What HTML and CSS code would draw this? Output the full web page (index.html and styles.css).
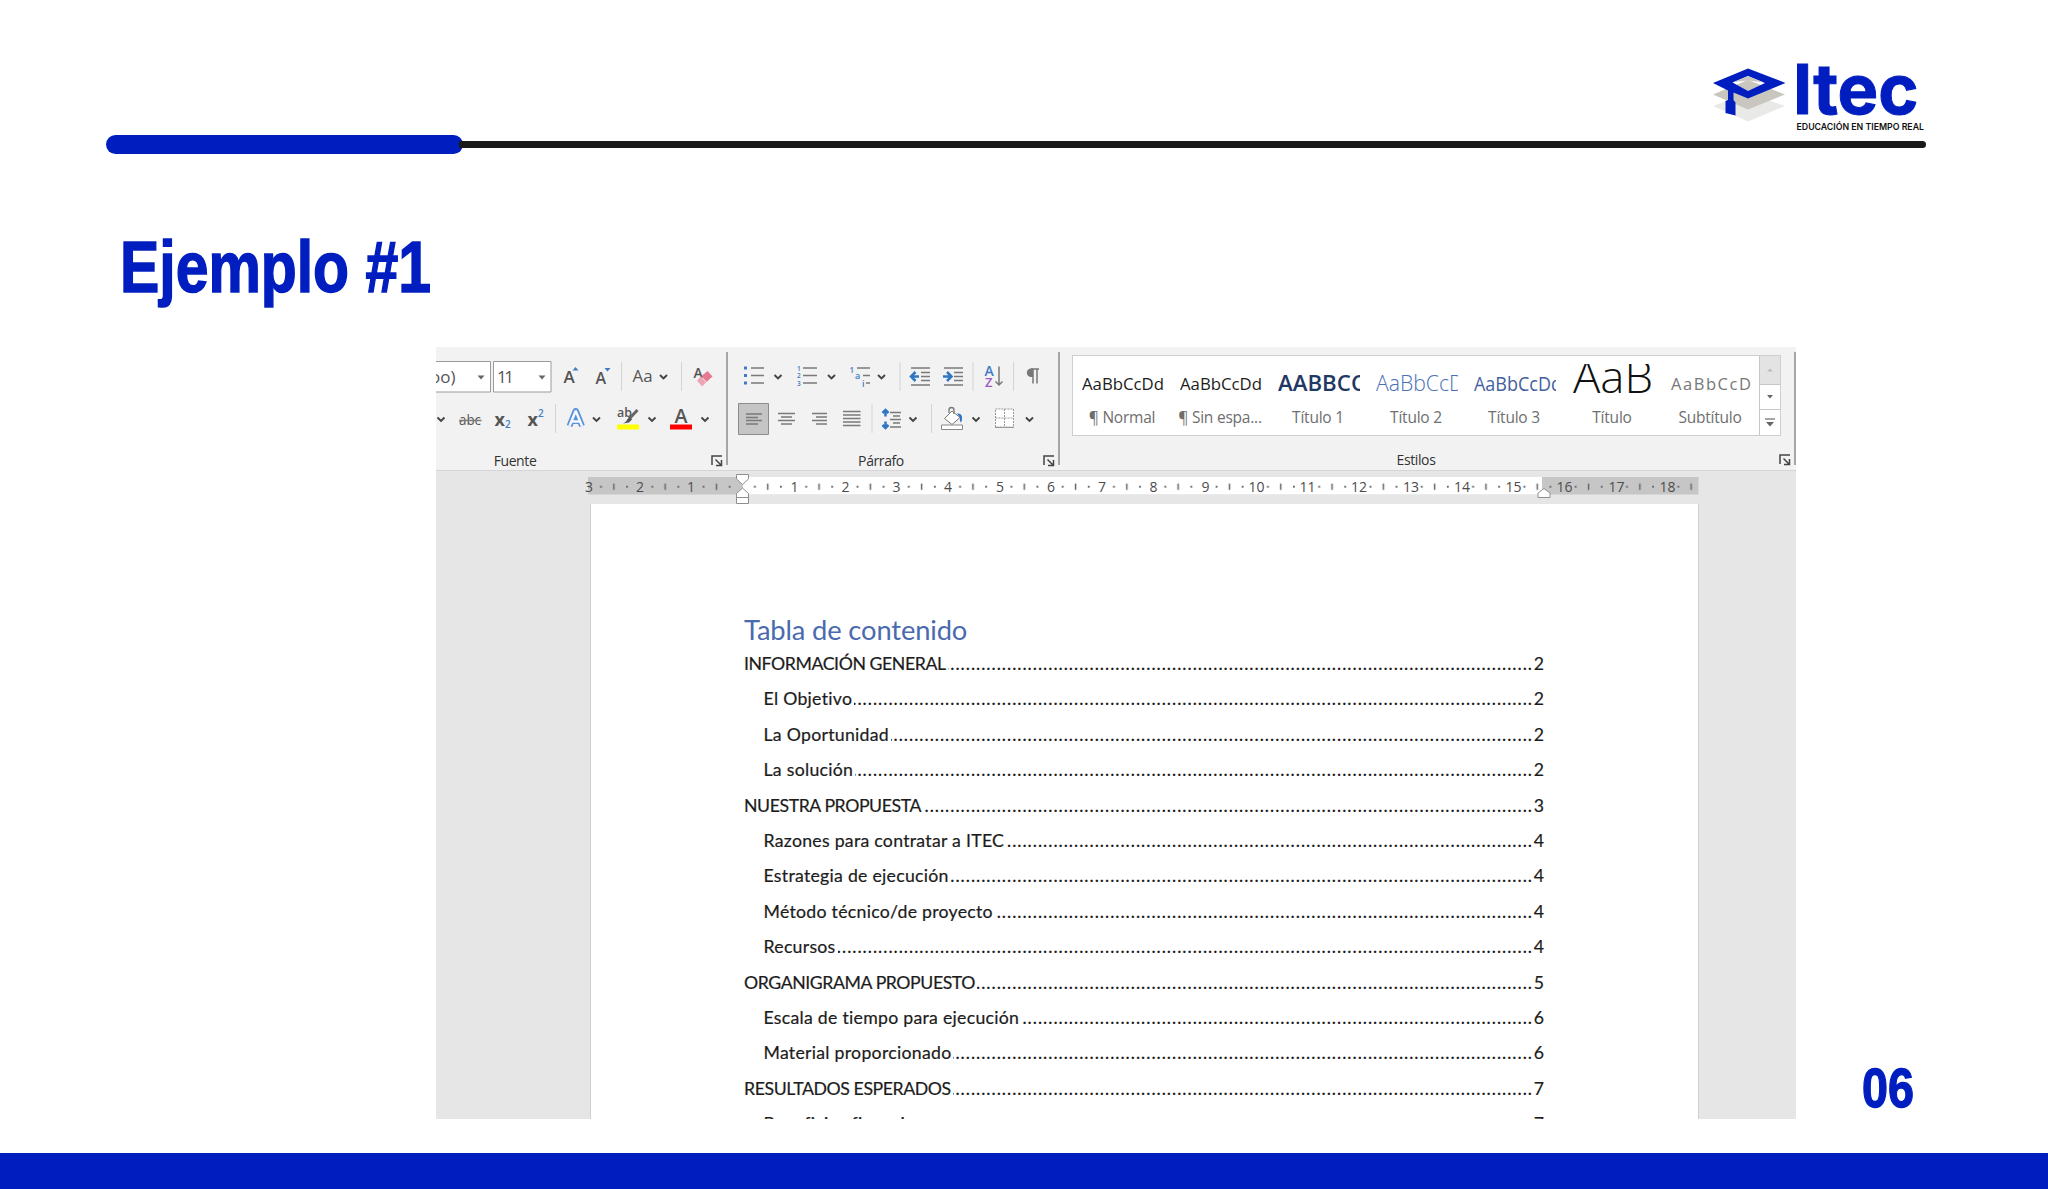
FILE: index.html
```html
<!DOCTYPE html>
<html lang="es">
<head>
<meta charset="utf-8">
<title>Ejemplo #1</title>
<link rel="stylesheet" href="styles.css">
</head>
<body>
<div class="slide">
  <header class="brand">
    <svg class="logo" viewBox="1710 55 220 80" width="220" height="80">
      <path d="M1713 106L1748 93L1785 106L1748 121.500Z" fill="#e9e9e7"/>
      <path d="M1713 94.500L1748 80L1785 94.500L1748 109.500Z" fill="#c9c6c0"/>
      <path fill-rule="evenodd" fill="#001ec0" d="M1748 68.500L1785.500 83L1748 98.500L1733.500 92.500V100L1735.500 102.500V115.500L1725.500 113V101L1728 100V90.500L1713 83ZM1748 76L1732.500 82.500L1748 91L1765 83Z"/>
      <path d="M1734 82L1748 76L1763 82.200L1748 80.500Z" fill="#c9c6c0"/>
      <text class="logo-name" x="1793" y="113.500" textLength="125.500" lengthAdjust="spacingAndGlyphs">Itec</text>
      <text class="logo-tag" x="1796.500" y="130" textLength="127.500" lengthAdjust="spacingAndGlyphs">EDUCACIÓN EN TIEMPO REAL</text>
    </svg>
  </header>
  <div class="rule"><span class="rule-thick"></span><span class="rule-thin"></span></div>
  <h1 class="title">Ejemplo #1</h1>

  <main class="content">
    <section class="word">
      <div class="ribbon">
        <div class="group group-font">
          <div class="tools">
            <svg viewBox="436 361 56 32" width="56" height="32"><path class="box" d="M430 361.500H490.500V392H430Z"/><text class="ui" x="430" y="382.500" font-size="17">oo)</text><path class="tri" d="M477.500 375.500h7l-3.500 4z"/></svg>
            <svg viewBox="492 361 64 32" width="64" height="32"><path class="box" d="M493.500 361.500H551V392H493.500Z"/><text class="ui" x="497" y="382.500" font-size="17" textLength="17">11</text><path class="tri" d="M538.500 375.500h7l-3.500 4z"/></svg>
            <svg viewBox="556 361 32 32" width="32" height="32"><text class="ui semi" x="563.500" y="383" font-size="17" textLength="12">A</text><path class="bluefill" d="M572.500 370.500l3-3.500l3 3.500z"/></svg>
            <svg viewBox="588 361 30 32" width="30" height="32"><text class="ui semi" x="595.500" y="384" font-size="16" textLength="11">A</text><path class="bluefill" d="M604.500 368l3 3.500l3-3.500z"/></svg>
            <svg viewBox="618 361 8 32" width="8" height="32"><path class="sep" d="M621.500 362V391"/></svg>
            <svg viewBox="626 361 46 32" width="46" height="32"><text class="ui" x="632.500" y="382" font-size="17" textLength="20" lengthAdjust="spacingAndGlyphs">Aa</text><path class="chev" d="M660 375l3.500 3.500l3.500-3.500"/></svg>
            <svg viewBox="672 361 16 32" width="16" height="32"><path class="sep" d="M681.500 362V391"/></svg>
            <svg viewBox="688 361 39 32" width="39" height="32"><text class="ui semi" x="693.500" y="378" font-size="14">A</text><path d="M697 380.500l4-4l5 6l-4 4z" fill="#f0a3b2"/><path d="M701.500 376L707.500 371L712.500 376.500L706.500 382Z" fill="#e4798f"/></svg>
          </div>
          <div class="tools">
            <svg viewBox="436 403 16 32" width="16" height="32"><path class="chev" d="M437.500 417.500l3.500 3.500l3.500-3.500"/></svg>
            <svg viewBox="452 403 36 32" width="36" height="32"><text class="ui" x="459" y="425" font-size="14" textLength="22" lengthAdjust="spacingAndGlyphs">abc</text><path class="line" d="M459 420.500H481.500"/></svg>
            <svg viewBox="488 403 34 32" width="34" height="32"><text class="ui bold" x="494.500" y="425.500" font-size="18">x</text><text class="ui blue" x="505" y="427.500" font-size="10">2</text></svg>
            <svg viewBox="522 403 29 32" width="29" height="32"><text class="ui bold" x="527.500" y="425.500" font-size="18">x</text><text class="ui blue" x="538" y="417" font-size="10">2</text></svg>
            <svg viewBox="551 403 9 32" width="9" height="32"><path class="sep" d="M555.500 404V433"/></svg>
            <svg viewBox="560 403 46 32" width="46" height="32"><path d="M569.500 426L575.500 411H576L582 426M571.500 421H580" fill="none" stroke="#5b93d8" stroke-width="6" stroke-linejoin="round"/><path d="M569.500 426L575.500 411.500H576L582 426M571.500 421.500H580" fill="none" stroke="#f5f9ff" stroke-width="2.500"/><path class="chev" d="M593 417.500l3.500 3.500l3.500-3.500"/></svg>
            <svg viewBox="606 403 56 32" width="56" height="32"><text class="ui semi" x="617" y="417" font-size="13" textLength="15" lengthAdjust="spacingAndGlyphs">ab</text><path d="M637.500 410L629 419" stroke="#666" stroke-width="3"/><path d="M630 417l2 2.500l-3 3l-6 1q4-2 4-4z" fill="#555"/><path d="M617 424.500h22v5h-22z" fill="#ff0"/><path class="chev" d="M648.500 417.500l3.500 3.500l3.500-3.500"/></svg>
            <svg viewBox="662 403 60 32" width="60" height="32"><text class="ui semi" x="674.500" y="422.500" font-size="19" textLength="13" lengthAdjust="spacingAndGlyphs">A</text><path d="M670 424.500h22v5h-22z" fill="#f00"/><path class="chev" d="M701.500 417.500l3.500 3.500l3.500-3.500"/></svg>
          </div>
          <div class="caption"><span>Fuente</span><svg class="launcher" viewBox="0 0 12 12" width="12" height="12"><path d="M1 10V1H11M4.500 4.500L10 10M10.500 5V10.500H5"/></svg></div>
        </div>

        <div class="group group-par">
          <div class="tools">
            <svg viewBox="728 361 62 32" width="62" height="32"><path class="bluefill" d="M744 366.500h3v3h-3zM744 374h3v3h-3zM744 381.500h3v3h-3z"/><path class="line" d="M751 368H764M751 375.500H764M751 383H764"/><path class="chev" d="M774.500 375l3.500 3.500l3.500-3.500"/></svg>
            <svg viewBox="790 361 54 32" width="54" height="32"><g class="ui blue" font-size="6.500"><text x="797" y="370.500">1</text><text x="797" y="378">2</text><text x="797" y="386">3</text></g><path class="line" d="M803 368H817M803 375.500H817M803 383H817"/><path class="chev" d="M828 375l3.500 3.500l3.500-3.500"/></svg>
            <svg viewBox="844 361 52 32" width="52" height="32"><g class="ui blue"><text x="849.500" y="373" font-size="8">1</text><text x="855" y="379" font-size="9">a</text><text x="862" y="386.500" font-size="9">i</text></g><path class="line" d="M857 368H870M863 375.500H870M866 383H870"/><path class="chev" d="M878 375l3.500 3.500l3.500-3.500"/></svg>
            <svg viewBox="896 361 8 32" width="8" height="32"><path class="sep" d="M900 362V391"/></svg>
            <svg viewBox="904 361 32 32" width="32" height="32"><path class="line" d="M911 368H930M921 372.500H930M921 376.500H930M921 380.500H930M911 385H930"/><path class="arrow" d="M919 376.500H911M915.500 372L911 376.500L915.500 381"/></svg>
            <svg viewBox="936 361 32 32" width="32" height="32"><path class="line" d="M944 368H963M954 372.500H963M954 376.500H963M954 380.500H963M944 385H963"/><path class="arrow" d="M943 376.500H951M947 372L951.500 376.500L947 381"/></svg>
            <svg viewBox="968 361 10 32" width="10" height="32"><path class="sep" d="M973 362V391"/></svg>
            <svg viewBox="978 361 30 32" width="30" height="32"><text class="ui blue" x="984.500" y="376" font-size="14" textLength="10">A</text><text class="ui purple" x="985" y="386.500" font-size="13" textLength="9">Z</text><path class="line" d="M999 366.500V385M995.500 381.500L999 385L1002.500 381.500"/></svg>
            <svg viewBox="1008 361 10 32" width="10" height="32"><path class="sep" d="M1013.500 362V391"/></svg>
            <svg viewBox="1018 361 30 32" width="30" height="32"><path d="M1033 369V383.500M1037 369V383.500M1031 369H1039" fill="none" stroke="#777" stroke-width="1.500"/><path d="M1033 368.500h-2a4.200 4.200 0 0 0 0 8.400h2z" fill="#777"/></svg>
          </div>
          <div class="tools">
            <svg viewBox="728 403 45 32" width="45" height="32"><path d="M738.500 403.500H768.500V434.500H738.500Z" fill="#c5c5c5" stroke="#8c8c8c"/><path class="line" d="M746 414H762M746 417.500H758M746 420.500H762M746 424H758"/></svg>
            <svg viewBox="773 403 32 32" width="32" height="32"><path class="line" d="M778 413.500H795M781 417H792M778 420.500H795M781 424H792"/></svg>
            <svg viewBox="805 403 32 32" width="32" height="32"><path class="line" d="M812 413.500H827M816 417H827M812 420.500H827M816 424H827"/></svg>
            <svg viewBox="837 403 31 32" width="31" height="32"><path class="line" d="M843 411.500H860.500M843 415H860.500M843 418.500H860.500M843 422H860.500M843 425.500H860.500"/></svg>
            <svg viewBox="868 403 10 32" width="10" height="32"><path class="sep" d="M872 404V433"/></svg>
            <svg viewBox="878 403 48 32" width="48" height="32"><path class="arrow" d="M885.500 416.500V410.500M882.500 413L885.500 410L888.500 413M885.500 421.500V427.500M882.500 425L885.500 428L888.500 425"/><path class="line" d="M890 412.500H901M893 416H900M890 419.500H901M893 423H900M890 427H901"/><path class="chev" d="M909.500 417.500l3.500 3.500l3.500-3.500"/></svg>
            <svg viewBox="926 403 10 32" width="10" height="32"><path class="sep" d="M931.500 404V433"/></svg>
            <svg viewBox="936 403 50 32" width="50" height="32"><path d="M944.500 418.500L952 411L960 417.500L952 424.500Z" fill="#fff" stroke="#777"/><path d="M949 413V410a2.500 2.500 0 0 1 5 0V414" fill="none" stroke="#777" stroke-width="1.300"/><path d="M957 413.500q4-.5 5 3q.5 4-1 6q-1.500-1-1-5z" fill="#2e75c5"/><path d="M941.500 425H962.500V429.500H941.500Z" fill="#fff" stroke="#888"/><path class="chev" d="M972.500 417.500l3.500 3.500l3.500-3.500"/></svg>
            <svg viewBox="986 403 60 32" width="60" height="32"><path d="M995.500 409H1013.500V427H995.500Z" fill="#fff" stroke="#999" stroke-dasharray="2 1"/><path d="M1004.500 409V427M995.500 418H1013.500" stroke="#999" stroke-dasharray="2 1"/><path d="M995 427.500H1014" stroke="#999"/><path class="chev" d="M1026 417.500l3.500 3.500l3.500-3.500"/></svg>
          </div>
          <div class="caption"><span>Párrafo</span><svg class="launcher" viewBox="0 0 12 12" width="12" height="12"><path d="M1 10V1H11M4.500 4.500L10 10M10.500 5V10.500H5"/></svg></div>
        </div>

        <div class="group group-styles">
          <div class="gallery">
            <div class="style"><svg viewBox="0 0 82 40" width="82" height="40"><text x="0" y="34.500" font-size="17" textLength="82" fill="#1c1c1c" lengthAdjust="spacingAndGlyphs">AaBbCcDd</text></svg><span>¶ Normal</span></div>
            <div class="style"><svg viewBox="0 0 82 40" width="82" height="40"><text x="0" y="34.500" font-size="17" textLength="82" fill="#1c1c1c" lengthAdjust="spacingAndGlyphs">AaBbCcDd</text></svg><span>¶ Sin espa...</span></div>
            <div class="style"><svg viewBox="0 0 82 40" width="82" height="40"><text x="0" y="36" font-size="21" textLength="87" fill="#1f3864" font-weight="600" lengthAdjust="spacingAndGlyphs">AABBCC</text></svg><span>Título 1</span></div>
            <div class="style"><svg viewBox="0 0 82 40" width="82" height="40"><text x="0" y="35.500" font-size="21.500" textLength="88" fill="#4a6fb5" font-weight="300" lengthAdjust="spacingAndGlyphs">AaBbCcD</text></svg><span>Título 2</span></div>
            <div class="style"><svg viewBox="0 0 82 40" width="82" height="40"><text x="0" y="35.500" font-size="19.500" textLength="88" fill="#44619c" lengthAdjust="spacingAndGlyphs">AaBbCcDd</text></svg><span>Título 3</span></div>
            <div class="style"><svg viewBox="0 0 82 40" width="82" height="40"><svg x="0" y="9" width="82" height="31" viewBox="0 9 82 31"><text x="1" y="38" font-size="44" textLength="80" fill="#111" font-weight="300" lengthAdjust="spacingAndGlyphs">AaB</text></svg></svg><span>Título</span></div>
            <div class="style"><svg viewBox="0 0 82 40" width="82" height="40"><text x="1" y="34.500" font-size="16.500" textLength="80" fill="#777">AaBbCcD</text></svg><span>Subtítulo</span></div>
            <div class="scroller">
              <div class="scroll off"><svg viewBox="0 0 6 4" width="6" height="4"><path d="M0 3.500l3-3l3 3z" fill="#bbb"/></svg></div>
              <div class="scroll"><svg viewBox="0 0 6 4" width="6" height="4"><path d="M0 0h6l-3 3.500z" fill="#666"/></svg></div>
              <div class="scroll"><svg viewBox="0 0 10 9" width="10" height="9"><path d="M0 1h10" stroke="#777" stroke-width="1.300"/><path d="M1 4h8l-4 4.500z" fill="#666"/></svg></div>
            </div>
          </div>
          <div class="caption"><span>Estilos</span><svg class="launcher" viewBox="0 0 12 12" width="12" height="12"><path d="M1 10V1H11M4.500 4.500L10 10M10.500 5V10.500H5"/></svg></div>
        </div>
      </div>

      <svg class="ruler" viewBox="436 471 1360 33" width="1360" height="33">
        <defs>
          <pattern id="ticks" x="743.500" y="477" width="51.300" height="17.500" patternUnits="userSpaceOnUse">
            <path d="M10.500 8.800h1.800v1.800h-1.800zM36.500 8.800h1.800v1.800h-1.800zM23.500 6.500h1.500v6.500h-1.500z" fill="#666"/>
          </pattern>
        </defs>
        <path d="M588 477H1698.500V494.500H588Z" fill="#c6c6c6"/>
        <path d="M743 477H1542V494.500H743Z" fill="#fff"/>
        <path d="M590 477H1697V494.500H590Z" fill="url(#ticks)"/>
        <g class="nums">
          <text x="589" y="491.500">3</text><text x="640" y="491.500">2</text><text x="691" y="491.500">1</text>
          <text x="794.500" y="491.500">1</text><text x="845.500" y="491.500">2</text><text x="896.500" y="491.500">3</text><text x="948" y="491.500">4</text><text x="1000" y="491.500">5</text><text x="1051" y="491.500">6</text><text x="1102" y="491.500">7</text><text x="1153.500" y="491.500">8</text><text x="1205.500" y="491.500">9</text><text x="1256.500" y="491.500">10</text><text x="1307.500" y="491.500">11</text><text x="1359" y="491.500">12</text><text x="1411" y="491.500">13</text><text x="1462" y="491.500">14</text><text x="1513.500" y="491.500">15</text><text x="1564.500" y="491.500">16</text><text x="1616.500" y="491.500">17</text><text x="1667.500" y="491.500">18</text>
        </g>
        <path class="marker" d="M736.500 474.500H748.500V479L742.500 484.500L736.500 479ZM742.500 488L748.500 493.500V503.500H736.500V493.500ZM736.500 497.500H748.500"/>
        <path class="marker" d="M1544 488.500L1550 493V497.500H1538V493Z"/>
      </svg>

      <div class="canvas">
        <article class="page">
          <h2 class="toc-title">Tabla de contenido</h2>
          <ul class="toc">
            <li><span>INFORMACIÓN GENERAL</span><i></i><b>2</b></li>
            <li class="sub"><span>El Objetivo</span><i></i><b>2</b></li>
            <li class="sub"><span>La Oportunidad</span><i></i><b>2</b></li>
            <li class="sub"><span>La solución</span><i></i><b>2</b></li>
            <li><span>NUESTRA PROPUESTA</span><i></i><b>3</b></li>
            <li class="sub"><span>Razones para contratar a ITEC</span><i></i><b>4</b></li>
            <li class="sub"><span>Estrategia de ejecución</span><i></i><b>4</b></li>
            <li class="sub"><span>Método técnico/de proyecto</span><i></i><b>4</b></li>
            <li class="sub"><span>Recursos</span><i></i><b>4</b></li>
            <li><span>ORGANIGRAMA PROPUESTO</span><i></i><b>5</b></li>
            <li class="sub"><span>Escala de tiempo para ejecución</span><i></i><b>6</b></li>
            <li class="sub"><span>Material proporcionado</span><i></i><b>6</b></li>
            <li><span>RESULTADOS ESPERADOS</span><i></i><b>7</b></li>
            <li class="sub"><span>Beneficios financieros</span><i></i><b>7</b></li>
          </ul>
        </article>
      </div>
    </section>
    <div class="page-number">06</div>
  </main>
  <footer class="band"></footer>
</div>
</body>
</html>
```
FILE: styles.css
```css
* { box-sizing: border-box; }
body { margin: 0; background: #fff; }
svg { display: block; flex: none; }

.slide { width: 2048px; height: 1189px; display: flex; flex-direction: column; overflow: hidden; }

.brand { height: 135px; padding: 55px 118px 0 0; display: flex; justify-content: flex-end; flex: none; }
.logo-name { font: 700 69px Inter, sans-serif; fill: #001ec0; stroke: #001ec0; stroke-width: 1px; }
.logo-tag { font: 600 9.3px Inter, sans-serif; fill: #111; }

.rule { height: 19px; margin: 0 122.5px 0 106px; display: flex; align-items: center; flex: none; }
.rule-thick { width: 356.500px; height: 19px; border-radius: 10px; background: #001ec0; }
.rule-thin { flex: 1; height: 7.500px; margin-left: -4px; border-radius: 0 4px 4px 0; background: #191919; }

.title {
  height: 193px; margin: 0; padding: 73px 0 0 120px; flex: none;
  font: 700 72px/80px "Liberation Sans", sans-serif; color: #001ec0;
  -webkit-text-stroke: 1.500px #001ec0;
  transform: scaleX(.818); transform-origin: 120px 0; white-space: nowrap;
}

.content { height: 806px; display: flex; flex: none; padding-left: 436px; }
.page-number {
  margin: 709px 0 0 66px; height: 64px;
  font: 700 55px/64px "Liberation Sans", sans-serif; color: #001ec0;
  -webkit-text-stroke: 1.300px #001ec0;
  transform: scaleX(.85); transform-origin: 0 0;
}
.band { height: 36px; background: #001ec0; flex: none; }

.word { width: 1360px; height: 772px; overflow: hidden; background: #e6e6e6; display: flex; flex-direction: column; }

.ribbon { height: 124px; display: flex; background: #f2f2f2; border-bottom: 1px solid #d5d5d5; flex: none; }
.group { display: flex; flex-direction: column; padding-top: 14px; flex: none;
  background: linear-gradient(#a6a6a6, #a6a6a6) right 0 top 5px / 2px 113px no-repeat; }
.group-font { width: 292px; }
.group-par { width: 332px; }
.group-styles { width: 736px; padding: 7px 0 0 12px; }
.tools { display: flex; height: 32px; margin-bottom: 10px; }
.tools + .tools { margin-bottom: 0; }

.ui { font-family: "Open Sans", sans-serif; fill: #555; }
.semi { font-weight: 600; }
.bold { font-weight: 700; }
.blue { fill: #3f7cc4; font-weight: 600; }
.purple { fill: #9b59c6; font-weight: 600; }
.bluefill { fill: #3f7cc4; }
.box { fill: #fff; stroke: #9b9b9b; }
.tri { fill: #666; }
.sep { stroke: #d4d4d4; }
.line { fill: none; stroke: #7a7a7a; stroke-width: 1.500; }
.chev { fill: none; stroke: #444; stroke-width: 1.900; }
.arrow { fill: none; stroke: #3077c2; stroke-width: 2.500; }

.caption {
  position: relative; height: 20px; margin-top: 15.500px; display: flex; justify-content: center; align-items: center;
  font: 14px/20px "Open Sans", sans-serif; letter-spacing: -.4px; color: #333;
}
.group-font .caption { padding-right: 134px; }
.group-par .caption { padding-right: 26px; }
.group-styles .caption { padding-right: 36px; margin-top: 14.500px; }
.launcher { position: absolute; right: 5px; top: 4px; fill: none; stroke: #444; stroke-width: 1.500; }

.gallery { width: 709px; height: 82px; margin-top: 1px; display: flex; background: #fff; border: 1px solid #cfcfcf; }
.style { width: 98px; display: flex; flex-direction: column; align-items: center; padding-left: 1px; flex: none; }
.style svg { overflow: hidden; margin-top: -1px; }
.style text { font-family: "Open Sans", sans-serif; }
.style span { font: 15.500px/22px "Open Sans", sans-serif; letter-spacing: -.22px; color: #6e6e6e; margin: 11px 1px 0 0; white-space: nowrap; }
.scroller { width: 21px; display: flex; flex-direction: column; border-left: 1px solid #c6c6c6; }
.scroll { flex: 1; display: flex; align-items: center; justify-content: center; border-bottom: 1px solid #c6c6c6; }
.scroll:last-child { border-bottom: 0; }
.scroll.off { background: #e3e3e3; flex: 1.150; }

.nums { font: 14px "Open Sans", sans-serif; fill: #4c4c4c; text-anchor: middle; }
.marker { fill: #fff; stroke: #8f8f8f; }

.canvas { flex: 1; min-height: 0; padding: 0 97px 0 154px; overflow: hidden; }
.page { height: 100%; background: #fff; border: 1px solid #d0d0d0; border-width: 0 1px; padding: 108px 154px 0 153px; overflow: hidden; }
.toc-title { margin: 0; font: 400 27.300px/36px Lato, sans-serif; letter-spacing: -.130px; color: #4a6ab0; white-space: nowrap; }
.toc { list-style: none; margin: -2px 0 0; padding: 0; font: 17.700px/35.400px Lato, sans-serif; color: #1c1c1c; font-variant-ligatures: none; }
.toc li { display: flex; height: 35.400px; white-space: nowrap; }
.toc span { letter-spacing: -.420px; -webkit-text-stroke: .2px #1c1c1c; }
.toc .sub { padding-left: 19.500px; }
.toc .sub span { letter-spacing: .270px; }
.toc i { flex: 1; min-width: 0; overflow: hidden; direction: rtl; margin: 0 1px 0 2px; font: 600 17px/36px "Open Sans", sans-serif; letter-spacing: .500px; }
.toc i::before { content: "......................................................................................................................................................................................"; }
.toc b { font-weight: 400; -webkit-text-stroke: .2px #1c1c1c; }
```
